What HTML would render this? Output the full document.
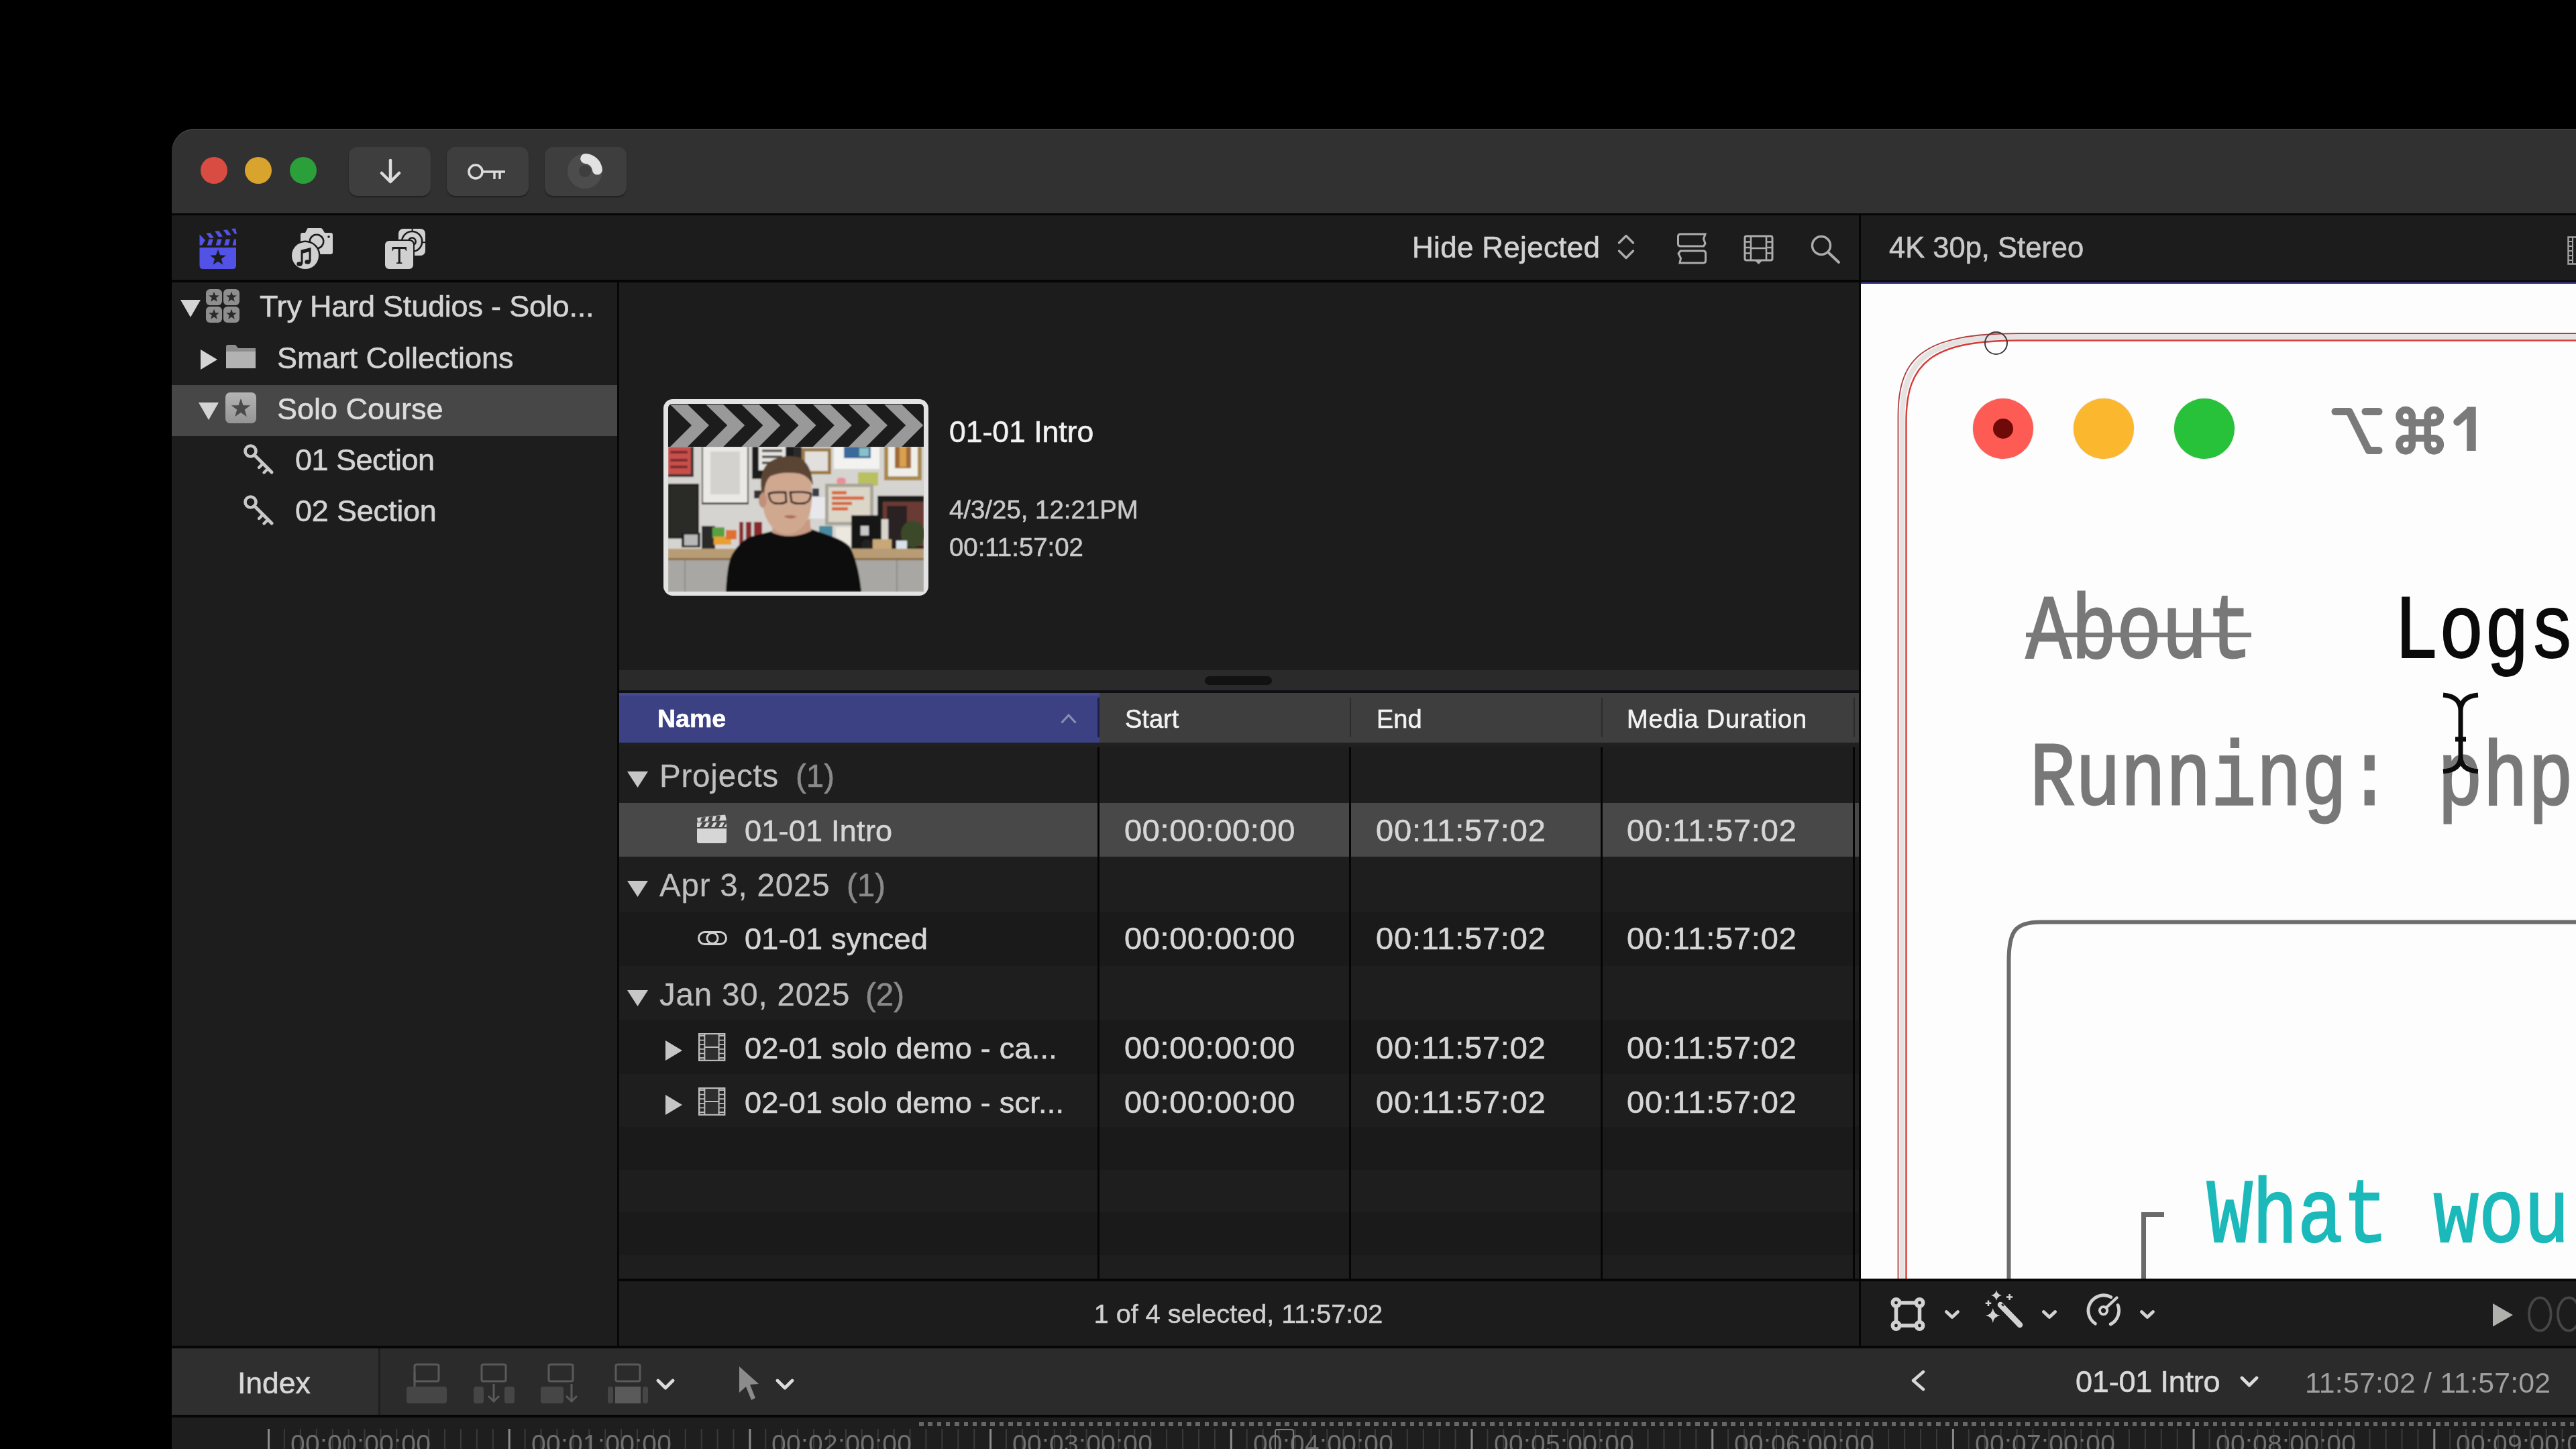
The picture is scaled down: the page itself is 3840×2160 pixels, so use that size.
<!DOCTYPE html>
<html><head><meta charset="utf-8"><title>Final Cut Pro</title>
<style>
html,body{margin:0;padding:0;width:3840px;height:2160px;overflow:hidden;background:#000;}
body{position:relative;font-family:"Liberation Sans",sans-serif;}
body>div,body>svg{position:absolute;box-sizing:border-box;}
.t{line-height:1;white-space:nowrap;-webkit-text-stroke-width:0.6px;-webkit-font-smoothing:antialiased;will-change:transform;}
</style></head><body>
<div style="left:256px;top:192px;width:3584px;height:1968px;background:#1c1c1c;border-top-left-radius:34px;"></div>
<div style="left:256px;top:192px;width:3584px;height:126px;background:#313131;border-top-left-radius:34px;box-shadow:inset 0 1.5px 0 #424242;"></div>
<div style="left:299px;top:234px;width:40px;height:40px;border-radius:50%;background:#d94c42"></div>
<div style="left:365px;top:234px;width:40px;height:40px;border-radius:50%;background:#d8a42e"></div>
<div style="left:432px;top:234px;width:40px;height:40px;border-radius:50%;background:#2a9f3a"></div>
<div style="left:520px;top:219px;width:122px;height:73px;background:#3e3e3e;border-radius:13px;box-shadow:0 2px 2px rgba(0,0,0,0.35);"></div>
<div style="left:666px;top:219px;width:122px;height:73px;background:#3e3e3e;border-radius:13px;box-shadow:0 2px 2px rgba(0,0,0,0.35);"></div>
<div style="left:812px;top:219px;width:122px;height:73px;background:#3e3e3e;border-radius:13px;box-shadow:0 2px 2px rgba(0,0,0,0.35);"></div>
<svg style="left:552px;top:228px;" width="60" height="56" viewBox="0 0 60 56"><path d="M30 11 V42 M17 30 L30 43 L43 30" stroke="#dddddd" stroke-width="4.5" fill="none" stroke-linecap="round" stroke-linejoin="round"/></svg>
<svg style="left:690px;top:236px;" width="70" height="40" viewBox="0 0 70 40"><circle cx="19" cy="20" r="10" stroke="#dddddd" stroke-width="3.6" fill="none"/><path d="M29 20 H63" stroke="#dddddd" stroke-width="3.6"/><path d="M47 20 V31 M55 20 V31" stroke="#dddddd" stroke-width="3.4"/></svg>
<svg style="left:840px;top:223px;" width="64" height="64" viewBox="0 0 64 64"><circle cx="32" cy="32" r="17.5" stroke="#4c4c4c" stroke-width="17" fill="none"/><path d="M32.65 13.51 A18.5 18.5 0 0 1 50.40 30.07" stroke="#e2e2e2" stroke-width="15" stroke-linecap="round" fill="none"/></svg>
<div style="left:256px;top:318px;width:3584px;height:3px;background:#050505;"></div>
<div style="left:256px;top:321px;width:3584px;height:96px;background:#1c1c1c;"></div>
<div style="left:256px;top:417px;width:3584px;height:4px;background:#050505;"></div>
<svg style="left:296px;top:339px;" width="58" height="64" viewBox="0 0 58 64"><g fill="#5252e6"><path d="M1.5 30 H56 V56.5 Q56 62 50.5 62 H7 Q1.5 62 1.5 56.5 Z"/><path d="M1.5 10.5 L10.0 19.0 L5.0 26.8 L1.5 26.8 Z"/><path d="M15.4 17.6 L21.8 17.6 L19.2 26.8 L12.8 26.8 Z"/><path d="M28.3 17.6 L34.7 17.6 L32.1 26.8 L25.7 26.8 Z"/><path d="M40.7 17.6 L47.1 17.6 L44.5 26.8 L38.1 26.8 Z"/><path d="M53.1 17.6 L56.0 17.6 L56.0 26.8 L50.5 26.8 Z"/><path d="M11.4 8.7 L17.4 8.1 L23.0 15.6 L17.0 16.2 Z"/><path d="M24.3 5.7 L30.3 5.1 L36.0 13.6 L30.0 14.2 Z"/><path d="M36.8 3.9 L42.8 3.3 L48.5 11.2 L42.5 11.8 Z"/><path d="M49.0 2.0 L55.0 1.4 L57.0 9.5 L54.2 10.1 Z"/></g><polygon points="29.00,33.00 32.06,41.29 40.89,41.64 33.95,47.11 36.35,55.61 29.00,50.70 21.65,55.61 24.05,47.11 17.11,41.64 25.94,41.29" fill="#1c1c1c"/></svg>
<svg style="left:432px;top:339px;" width="66" height="64" viewBox="0 0 66 64"><g fill="#d0d0d0"><path d="M26 2 Q26 1 28 1 H46 Q48 1 49 3 L52 8 H61 Q64 8 64 11 V37 Q64 40 61 40 H19 Q16 40 16 37 V11 Q16 8 19 8 H23 Z"/></g><circle cx="40" cy="21" r="11.5" fill="#1c1c1c"/><circle cx="40" cy="21" r="9" fill="#d0d0d0"/><circle cx="58" cy="14" r="1.8" fill="#1c1c1c"/><circle cx="23" cy="42" r="22.5" fill="#1c1c1c"/><circle cx="23" cy="42" r="20" fill="#d0d0d0"/><path d="M18 54 V35 L30 32 V51" stroke="#1c1c1c" stroke-width="3" fill="none"/><path d="M18 35 L30 32 V36 L18 39 Z" fill="#1c1c1c"/><ellipse cx="14.5" cy="54.5" rx="4.2" ry="3.2" fill="#1c1c1c"/><ellipse cx="26.5" cy="51.5" rx="4.2" ry="3.2" fill="#1c1c1c"/></svg>
<svg style="left:572px;top:339px;" width="66" height="64" viewBox="0 0 66 64"><rect x="22" y="2" width="40" height="40" rx="7" fill="#d0d0d0"/><circle cx="42.2" cy="21" r="15" fill="none" stroke="#1c1c1c" stroke-width="2.6"/><circle cx="42.2" cy="21" r="5.5" fill="none" stroke="#1c1c1c" stroke-width="2.6"/><path d="M42.6 1 V6 M57.5 22.3 H63" stroke="#1c1c1c" stroke-width="2"/><rect x="0" y="18" width="46" height="45" rx="7" fill="#1c1c1c"/><rect x="2" y="20" width="42" height="42" rx="6" fill="#d0d0d0"/><path d="M12.5 29 H34 V35 H33 Q32.5 32 30 32 H24.8 V51.5 Q24.8 52.5 27.5 52.5 V54 H19 V52.5 Q21.7 52.5 21.7 51.5 V32 H16.5 Q14 32 13.5 35 H12.5 Z" fill="#1c1c1c"/></svg>
<div style="left:256px;top:421px;width:664px;height:1585px;background:#1d1d1d;"></div>
<div style="left:920px;top:421px;width:3px;height:1585px;background:#070707;"></div>
<div style="left:256px;top:574px;width:664px;height:76px;background:#474747;"></div>
<div class="t" style="left:387px;top:434.4px;font-size:45px;color:#d4d4d4;font-family:'Liberation Sans',sans-serif;letter-spacing:-0.2px;">Try Hard Studios - Solo...</div>
<div class="t" style="left:413px;top:511.1px;font-size:45px;color:#d4d4d4;font-family:'Liberation Sans',sans-serif;">Smart Collections</div>
<div class="t" style="left:413px;top:586.7px;font-size:45px;color:#dcdcdc;font-family:'Liberation Sans',sans-serif;">Solo Course</div>
<div class="t" style="left:440px;top:662.6px;font-size:45px;color:#d4d4d4;font-family:'Liberation Sans',sans-serif;letter-spacing:-0.5px;">01 Section</div>
<div class="t" style="left:440px;top:739.3px;font-size:45px;color:#d4d4d4;font-family:'Liberation Sans',sans-serif;letter-spacing:-0.2px;">02 Section</div>
<svg style="left:269px;top:447px;" width="30" height="26" viewBox="0 0 30 26"><path d="M0 0 H30 L15 26 Z" fill="#d4d4d4"/></svg>
<svg style="left:299px;top:521px;" width="25" height="30" viewBox="0 0 25 30"><path d="M0 0 L25 15 L0 30 Z" fill="#d4d4d4"/></svg>
<svg style="left:296px;top:600px;" width="30" height="26" viewBox="0 0 30 26"><path d="M0 0 H30 L15 26 Z" fill="#d4d4d4"/></svg>
<svg style="left:307px;top:431px;" width="50" height="50" viewBox="0 0 50 50"><rect x="0" y="0" width="24" height="24" rx="6" fill="#8e8e8e"/><polygon points="12.00,3.80 14.00,9.25 19.80,9.47 15.23,13.05 16.82,18.63 12.00,15.40 7.18,18.63 8.77,13.05 4.20,9.47 10.00,9.25" fill="#2a2a2a"/><rect x="26" y="0" width="24" height="24" rx="6" fill="#8e8e8e"/><polygon points="38.00,3.80 40.00,9.25 45.80,9.47 41.23,13.05 42.82,18.63 38.00,15.40 33.18,18.63 34.77,13.05 30.20,9.47 36.00,9.25" fill="#2a2a2a"/><rect x="0" y="26" width="24" height="24" rx="6" fill="#8e8e8e"/><polygon points="12.00,29.80 14.00,35.25 19.80,35.47 15.23,39.05 16.82,44.63 12.00,41.40 7.18,44.63 8.77,39.05 4.20,35.47 10.00,35.25" fill="#2a2a2a"/><rect x="26" y="26" width="24" height="24" rx="6" fill="#8e8e8e"/><polygon points="38.00,29.80 40.00,35.25 45.80,35.47 41.23,39.05 42.82,44.63 38.00,41.40 33.18,44.63 34.77,39.05 30.20,35.47 36.00,35.25" fill="#2a2a2a"/></svg>
<svg style="left:336px;top:514px;" width="46" height="36" viewBox="0 0 46 36"><path d="M1 3 Q1 0 4 0 H15 L19 5 H45 V35 H1 Z" fill="#8c8c8c"/><path d="M1 10 H45 V35 H1 Z" fill="#b2b2b2"/></svg>
<svg style="left:336px;top:585px;" width="46" height="46" viewBox="0 0 46 46"><defs><linearGradient id="evg" x1="0" y1="0" x2="0" y2="1"><stop offset="0" stop-color="#b4b4b4"/><stop offset="1" stop-color="#949494"/></linearGradient></defs><rect x="0" y="0" width="46" height="46" rx="7" fill="url(#evg)"/><polygon points="23.00,9.00 26.53,19.15 37.27,19.36 28.71,25.85 31.82,36.14 23.00,30.00 14.18,36.14 17.29,25.85 8.73,19.36 19.47,19.15" fill="#4a4a4a"/></svg>
<svg style="left:362px;top:661px;" width="50" height="52" viewBox="0 0 50 52"><circle cx="11.5" cy="11.5" r="8" stroke="#c8c8c8" stroke-width="4.6" fill="none"/><path d="M17 17 L43 43" stroke="#c8c8c8" stroke-width="5" stroke-linecap="round"/><path d="M30 30 L24 36 M37.5 37.5 L31.5 43.5" stroke="#c8c8c8" stroke-width="4.4" stroke-linecap="round"/></svg>
<svg style="left:362px;top:737px;" width="50" height="52" viewBox="0 0 50 52"><circle cx="11.5" cy="11.5" r="8" stroke="#c8c8c8" stroke-width="4.6" fill="none"/><path d="M17 17 L43 43" stroke="#c8c8c8" stroke-width="5" stroke-linecap="round"/><path d="M30 30 L24 36 M37.5 37.5 L31.5 43.5" stroke="#c8c8c8" stroke-width="4.4" stroke-linecap="round"/></svg>
<div style="left:923px;top:421px;width:1848px;height:578px;background:#1c1c1c;"></div>
<div style="left:989px;top:595px;width:395px;height:293px;background:#e3e3e3;border-radius:14px;"></div>
<div style="left:996px;top:602px;width:381px;height:279px;background:#1c1c1c;border-radius:6px;overflow:hidden;"></div>
<svg style="left:996px;top:602px;" width="381" height="64" viewBox="996 602 381 64"><path d="M999.0 603 H1025.0 L1057.0 634 L1025.0 666 H999.0 L1031.0 634 Z" fill="#999999"/><path d="M1052.2 603 H1078.2 L1110.2 634 L1078.2 666 H1052.2 L1084.2 634 Z" fill="#999999"/><path d="M1105.4 603 H1131.4 L1163.4 634 L1131.4 666 H1105.4 L1137.4 634 Z" fill="#999999"/><path d="M1158.6 603 H1184.6 L1216.6 634 L1184.6 666 H1158.6 L1190.6 634 Z" fill="#999999"/><path d="M1211.8 603 H1237.8 L1269.8 634 L1237.8 666 H1211.8 L1243.8 634 Z" fill="#999999"/><path d="M1265.0 603 H1291.0 L1323.0 634 L1291.0 666 H1265.0 L1297.0 634 Z" fill="#999999"/><path d="M1318.2 603 H1344.2 L1376.2 634 L1344.2 666 H1318.2 L1350.2 634 Z" fill="#999999"/></svg>
<svg style="left:996px;top:666px" width="381" height="216" viewBox="0 0 381 216"><defs><filter id="pb" x="-5%" y="-5%" width="110%" height="110%"><feGaussianBlur stdDeviation="0.9"/></filter></defs><rect width="381" height="216" fill="#cfcdca"/><g filter="url(#pb)"><rect x="0" y="0" width="381" height="155" fill="#d6d4d0"/><rect x="0" y="0" width="38" height="45" fill="#2a2a2a"/><rect x="0" y="0" width="34" height="41" fill="#c8504c"/><rect x="3" y="6" width="26" height="4" fill="#7a2a2a"/><rect x="3" y="18" width="26" height="4" fill="#7a2a2a"/><rect x="3" y="28" width="26" height="4" fill="#7a2a2a"/><rect x="50" y="0" width="70" height="86" fill="#3a3a3a"/><rect x="52" y="0" width="66" height="83" fill="#ebe9e5"/><rect x="63" y="7" width="44" height="64" fill="#d4d2ce"/><rect x="125" y="0" width="62" height="48" fill="#1e1e1e"/><rect x="135" y="0" width="40" height="35" fill="#e6e4e0"/><rect x="140" y="4" width="30" height="4" fill="#555"/><rect x="140" y="13" width="30" height="4" fill="#555"/><rect x="140" y="22" width="30" height="4" fill="#555"/><rect x="187" y="0" width="12" height="20" fill="#2a2a2a"/><rect x="199" y="2" width="44" height="39" fill="#9c7a44"/><rect x="204" y="7" width="34" height="29" fill="#e2e0dc"/><rect x="247" y="0" width="68" height="33" fill="#f2f2f0"/><rect x="262" y="0" width="40" height="17" fill="#3a6a9a"/><rect x="285" y="2" width="14" height="12" fill="#8ac0c8"/><rect x="322" y="0" width="56" height="50" fill="#a88a50"/><rect x="328" y="0" width="44" height="44" fill="#f0eee8"/><rect x="338" y="0" width="24" height="32" fill="#a06a3a"/><rect x="345" y="0" width="10" height="30" fill="#d8a050"/><rect x="251" y="46" width="14" height="10" rx="5" fill="#e8909a"/><rect x="283" y="38" width="30" height="20" fill="#b8c060"/><rect x="0" y="55" width="46" height="82" fill="#1c1c1c"/><rect x="3" y="58" width="40" height="76" fill="#2a2a28"/><rect x="128" y="65" width="14" height="12" fill="#333"/><rect x="215" y="62" width="10" height="12" fill="#3a3a4a"/><rect x="212" y="75" width="26" height="32" fill="#e8e8ec"/><rect x="234" y="55" width="72" height="62" fill="#a8a498"/><rect x="239" y="60" width="62" height="52" fill="#dcd6c8"/><rect x="244" y="66" width="22" height="5" fill="#d86a40"/><rect x="244" y="74" width="48" height="5" fill="#d86a40"/><rect x="244" y="82" width="30" height="5" fill="#d86a40"/><rect x="244" y="90" width="24" height="5" fill="#d86a40"/><rect x="312" y="73" width="69" height="80" fill="#1a1a1a"/><rect x="320" y="82" width="61" height="66" fill="#6a3a34"/><rect x="326" y="88" width="30" height="60" fill="#2a2220"/><rect x="273" y="102" width="42" height="51" fill="#141414"/><rect x="287" y="118" width="12" height="14" fill="#c8c8c8"/><rect x="318" y="108" width="10" height="45" fill="#d8d4cc"/><ellipse cx="365" cy="130" rx="18" ry="20" fill="#3a4a2a"/><rect x="20" y="128" width="28" height="22" fill="#222"/><rect x="24" y="131" width="20" height="16" fill="#b8b8b8"/><rect x="50" y="118" width="20" height="35" fill="#2a2a2a"/><rect x="66" y="120" width="18" height="16" fill="#5aa040"/><rect x="68" y="134" width="26" height="12" fill="#e8a030"/><rect x="86" y="124" width="16" height="14" fill="#e07030"/><rect x="106" y="112" width="34" height="40" fill="#8a2a2a"/><rect x="112" y="112" width="4" height="40" fill="#ccc"/><rect x="124" y="112" width="4" height="40" fill="#ccc"/><rect x="225" y="118" width="20" height="25" fill="#4a8aa0"/><rect x="250" y="120" width="22" height="30" fill="#ece8e0"/><circle cx="296" cy="146" r="8" fill="#222"/><rect x="305" y="138" width="28" height="15" fill="#c8a878"/><rect x="340" y="140" width="16" height="12" fill="#d8e0e8"/><rect x="0" y="152" width="381" height="17" fill="#b89c74"/><rect x="0" y="166" width="381" height="3" fill="#8a6a4a"/><rect x="0" y="169" width="381" height="47" fill="#a9a7a3"/><rect x="24" y="169" width="2" height="47" fill="#8e8c88"/><rect x="340" y="169" width="2" height="47" fill="#8e8c88"/><path d="M86 216 Q88 170 97 158 Q108 140 123 134 L154 126 Q184 140 214 123 L245 134 Q262 140 271 149 Q284 175 288 216 Z" fill="#0d0d0d"/><path d="M154 110 Q156 124 155 128 Q184 140 214 125 Q211 118 212 108 Z" fill="#c89a84"/><path d="M140 70 Q136 40 150 28 Q170 14 195 20 Q214 30 214 62 Q216 90 208 108 Q196 130 176 130 Q158 128 148 110 Q140 96 140 70 Z" fill="#d0a890"/><ellipse cx="141" cy="80" rx="6" ry="11" fill="#c0907a"/><path d="M139 66 Q135 34 152 22 Q172 10 196 16 Q214 26 216 58 Q210 44 196 40 Q170 36 152 44 Q144 52 143 70 Z" fill="#5a4434"/><path d="M150 70 Q156 67 175 68 L176 82 Q170 86 158 84 Q151 82 150 70 Z M182 68 Q205 66 213 70 Q212 82 204 84 Q190 86 184 82 Z" fill="none" stroke="#2a2422" stroke-width="2.8"/><path d="M172 104 Q180 100 192 104 Q184 110 172 104 Z" fill="#a86a60"/></g></svg>
<div class="t" style="left:1415px;top:622.3px;font-size:44.5px;color:#f2f2f2;font-family:'Liberation Sans',sans-serif;">01-01 Intro</div>
<div class="t" style="left:1415px;top:741.1px;font-size:38.4px;color:#c9c9c9;font-family:'Liberation Sans',sans-serif;">4/3/25, 12:21PM</div>
<div class="t" style="left:1415px;top:796.5px;font-size:38.4px;color:#c9c9c9;font-family:'Liberation Sans',sans-serif;">00:11:57:02</div>
<div style="left:923px;top:999px;width:1848px;height:30px;background:#2a2a2a;"></div>
<div style="left:1796px;top:1008px;width:100px;height:13px;background:#121212;border-radius:7px;"></div>
<div style="left:923px;top:1029px;width:1848px;height:4px;background:#0e0f14;"></div>
<div style="left:923px;top:1033px;width:716px;height:74px;background:#3b4183;"></div>
<div style="left:923px;top:1033px;width:716px;height:4px;background:#434b8e;"></div>
<div style="left:1639px;top:1033px;width:1132px;height:74px;background:#3e3e3e;"></div>
<div style="left:1636px;top:1040px;width:3px;height:59px;background:#1c2050;"></div>
<div style="left:2012px;top:1040px;width:2px;height:59px;background:#2c2c2c;"></div>
<div style="left:2387px;top:1040px;width:2px;height:59px;background:#2c2c2c;"></div>
<div style="left:2763px;top:1040px;width:2px;height:59px;background:#2c2c2c;"></div>
<div class="t" style="left:980px;top:1053.3px;font-size:37.5px;color:#ffffff;font-family:'Liberation Sans',sans-serif;font-weight:700;">Name</div>
<svg style="left:1578px;top:1060px;" width="30" height="22" viewBox="0 0 30 22"><path d="M4.5 17.5 L15 6 L25.5 17.5" stroke="#8a8eb2" stroke-width="3.2" fill="none" stroke-linecap="butt" stroke-linejoin="miter"/></svg>
<div class="t" style="left:1677px;top:1052.8px;font-size:38px;color:#f2f2f2;font-family:'Liberation Sans',sans-serif;-webkit-text-stroke:0.6px #f2f2f2;">Start</div>
<div class="t" style="left:2052px;top:1052.8px;font-size:38px;color:#f2f2f2;font-family:'Liberation Sans',sans-serif;-webkit-text-stroke:0.6px #f2f2f2;">End</div>
<div class="t" style="left:2425px;top:1052.8px;font-size:38px;color:#f2f2f2;font-family:'Liberation Sans',sans-serif;letter-spacing:0.8px;-webkit-text-stroke:0.6px #f2f2f2;">Media Duration</div>
<div style="left:923px;top:1107px;width:1848px;height:799px;background:#1a1a1a;"></div>
<div style="left:923px;top:1107px;width:1848px;height:90px;background:#1e1e1e;"></div>
<div style="left:923px;top:1277px;width:1848px;height:83px;background:#1e1e1e;"></div>
<div style="left:923px;top:1440px;width:1848px;height:81px;background:#1e1e1e;"></div>
<div style="left:923px;top:1601px;width:1848px;height:79px;background:#1e1e1e;"></div>
<div style="left:923px;top:1744px;width:1848px;height:63px;background:#1e1e1e;"></div>
<div style="left:923px;top:1871px;width:1848px;height:35px;background:#1e1e1e;"></div>
<div style="left:923px;top:1197px;width:1848px;height:80px;background:#484848;"></div>
<div style="left:923px;top:1107px;width:1848px;height:7px;background:#202020;"></div>
<div style="left:1636px;top:1114px;width:3px;height:792px;background:#050505;"></div>
<div style="left:2011px;top:1114px;width:3px;height:792px;background:#050505;"></div>
<div style="left:2386px;top:1114px;width:3px;height:792px;background:#050505;"></div>
<div style="left:2762px;top:1114px;width:3px;height:792px;background:#050505;"></div>
<svg style="left:935px;top:1150px;" width="31" height="24" viewBox="0 0 31 24"><path d="M0 0 H31 L15.5 24 Z" fill="#c6c6c6"/></svg>
<div class="t" style="left:983px;top:1132.8px;font-size:47.5px;color:#bfbfbf;font-family:'Liberation Sans',sans-serif;letter-spacing:0.8px;-webkit-text-stroke-width:0.3px;">Projects</div>
<div class="t" style="left:1186px;top:1132.8px;font-size:47.5px;color:#8a8a8a;font-family:'Liberation Sans',sans-serif;">(1)</div>
<svg style="left:935px;top:1313px;" width="31" height="24" viewBox="0 0 31 24"><path d="M0 0 H31 L15.5 24 Z" fill="#c6c6c6"/></svg>
<div class="t" style="left:983px;top:1295.8px;font-size:47.5px;color:#bfbfbf;font-family:'Liberation Sans',sans-serif;letter-spacing:0.8px;-webkit-text-stroke-width:0.3px;">Apr 3, 2025</div>
<div class="t" style="left:1262px;top:1295.8px;font-size:47.5px;color:#8a8a8a;font-family:'Liberation Sans',sans-serif;">(1)</div>
<svg style="left:935px;top:1476px;" width="31" height="24" viewBox="0 0 31 24"><path d="M0 0 H31 L15.5 24 Z" fill="#c6c6c6"/></svg>
<div class="t" style="left:983px;top:1458.8px;font-size:47.5px;color:#bfbfbf;font-family:'Liberation Sans',sans-serif;letter-spacing:0.8px;-webkit-text-stroke-width:0.3px;">Jan 30, 2025</div>
<div class="t" style="left:1290px;top:1458.8px;font-size:47.5px;color:#8a8a8a;font-family:'Liberation Sans',sans-serif;">(2)</div>
<div class="t" style="left:1110px;top:1215.6px;font-size:45px;color:#d6d6d6;font-family:'Liberation Sans',sans-serif;letter-spacing:0.25px;">01-01 Intro</div>
<div class="t" style="left:1676px;top:1213.9px;font-size:47px;color:#d6d6d6;font-family:'Liberation Sans',sans-serif;letter-spacing:0.6px;">00:00:00:00</div>
<div class="t" style="left:2051px;top:1213.9px;font-size:47px;color:#d6d6d6;font-family:'Liberation Sans',sans-serif;letter-spacing:0.8px;">00:11:57:02</div>
<div class="t" style="left:2425px;top:1213.9px;font-size:47px;color:#d6d6d6;font-family:'Liberation Sans',sans-serif;letter-spacing:0.8px;">00:11:57:02</div>
<svg style="left:1038px;top:1213.7px;" width="48" height="44" viewBox="0 0 48 44"><path d="M1 21 H45 V40 Q45 43 42 43 H4 Q1 43 1 40 Z" fill="#d6d6d6"/><path d="M1 12 H45 V19 H1 Z" fill="#d6d6d6"/><path d="M1 5 L43 0.5 L45 9 L2 11 Z" fill="#d6d6d6"/><path d="M9 12 H15 L11 19 H5 Z M20 12 H26 L22 19 H16 Z M31 12 H37 L33 19 H27 Z M42 12 H45 V13 L41 19 H38 Z" fill="#474747"/><path d="M8 4.5 L14 4 L12 10.5 L6 10.8 Z M19 3.4 L25 2.8 L23 9.9 L17 10.2 Z M30 2.3 L36 1.7 L34 9.4 L28 9.6 Z" fill="#474747"/></svg>
<div class="t" style="left:1110px;top:1376.9px;font-size:45px;color:#d6d6d6;font-family:'Liberation Sans',sans-serif;letter-spacing:0.25px;">01-01 synced</div>
<div class="t" style="left:1676px;top:1375.2px;font-size:47px;color:#d6d6d6;font-family:'Liberation Sans',sans-serif;letter-spacing:0.6px;">00:00:00:00</div>
<div class="t" style="left:2051px;top:1375.2px;font-size:47px;color:#d6d6d6;font-family:'Liberation Sans',sans-serif;letter-spacing:0.8px;">00:11:57:02</div>
<div class="t" style="left:2425px;top:1375.2px;font-size:47px;color:#d6d6d6;font-family:'Liberation Sans',sans-serif;letter-spacing:0.8px;">00:11:57:02</div>
<svg style="left:1039px;top:1387px;" width="48" height="24" viewBox="0 0 48 24"><rect x="2.5" y="2.5" width="41" height="18" rx="9" fill="none" stroke="#cfcfcf" stroke-width="3"/><circle cx="23" cy="11.5" r="8" fill="none" stroke="#cfcfcf" stroke-width="3"/></svg>
<div class="t" style="left:1110px;top:1539.9px;font-size:45px;color:#d6d6d6;font-family:'Liberation Sans',sans-serif;letter-spacing:0.25px;">02-01 solo demo - ca...</div>
<div class="t" style="left:1676px;top:1538.2px;font-size:47px;color:#d6d6d6;font-family:'Liberation Sans',sans-serif;letter-spacing:0.6px;">00:00:00:00</div>
<div class="t" style="left:2051px;top:1538.2px;font-size:47px;color:#d6d6d6;font-family:'Liberation Sans',sans-serif;letter-spacing:0.8px;">00:11:57:02</div>
<div class="t" style="left:2425px;top:1538.2px;font-size:47px;color:#d6d6d6;font-family:'Liberation Sans',sans-serif;letter-spacing:0.8px;">00:11:57:02</div>
<svg style="left:992px;top:1551px;" width="25" height="30" viewBox="0 0 25 30"><path d="M0 0 L25 15 L0 30 Z" fill="#c6c6c6"/></svg>
<svg style="left:1041px;top:1540px;" width="42" height="44" viewBox="0 0 42 44"><rect x="1.2" y="1.2" width="38" height="39.5" fill="#262626" stroke="#bdbdbd" stroke-width="2.4"/><path d="M9.5 1.2 V40.7 M30.5 1.2 V40.7 M9.5 21 H30.5" stroke="#bdbdbd" stroke-width="2.2"/><rect x="10.6" y="2.3" width="18.8" height="17.6" fill="#2e2e2e"/><rect x="10.6" y="22.1" width="18.8" height="17.5" fill="#2e2e2e"/><path d="M2 4.0 H9 M31 4.0 H38" stroke="#bdbdbd" stroke-width="1.8"/><path d="M2 10.6 H9 M31 10.6 H38" stroke="#bdbdbd" stroke-width="1.8"/><path d="M2 17.2 H9 M31 17.2 H38" stroke="#bdbdbd" stroke-width="1.8"/><path d="M2 23.8 H9 M31 23.8 H38" stroke="#bdbdbd" stroke-width="1.8"/><path d="M2 30.4 H9 M31 30.4 H38" stroke="#bdbdbd" stroke-width="1.8"/><path d="M2 37.0 H9 M31 37.0 H38" stroke="#bdbdbd" stroke-width="1.8"/></svg>
<div class="t" style="left:1110px;top:1620.9px;font-size:45px;color:#d6d6d6;font-family:'Liberation Sans',sans-serif;letter-spacing:0.25px;">02-01 solo demo - scr...</div>
<div class="t" style="left:1676px;top:1619.2px;font-size:47px;color:#d6d6d6;font-family:'Liberation Sans',sans-serif;letter-spacing:0.6px;">00:00:00:00</div>
<div class="t" style="left:2051px;top:1619.2px;font-size:47px;color:#d6d6d6;font-family:'Liberation Sans',sans-serif;letter-spacing:0.8px;">00:11:57:02</div>
<div class="t" style="left:2425px;top:1619.2px;font-size:47px;color:#d6d6d6;font-family:'Liberation Sans',sans-serif;letter-spacing:0.8px;">00:11:57:02</div>
<svg style="left:992px;top:1632px;" width="25" height="30" viewBox="0 0 25 30"><path d="M0 0 L25 15 L0 30 Z" fill="#c6c6c6"/></svg>
<svg style="left:1041px;top:1621px;" width="42" height="44" viewBox="0 0 42 44"><rect x="1.2" y="1.2" width="38" height="39.5" fill="#262626" stroke="#bdbdbd" stroke-width="2.4"/><path d="M9.5 1.2 V40.7 M30.5 1.2 V40.7 M9.5 21 H30.5" stroke="#bdbdbd" stroke-width="2.2"/><rect x="10.6" y="2.3" width="18.8" height="17.6" fill="#2e2e2e"/><rect x="10.6" y="22.1" width="18.8" height="17.5" fill="#2e2e2e"/><path d="M2 4.0 H9 M31 4.0 H38" stroke="#bdbdbd" stroke-width="1.8"/><path d="M2 10.6 H9 M31 10.6 H38" stroke="#bdbdbd" stroke-width="1.8"/><path d="M2 17.2 H9 M31 17.2 H38" stroke="#bdbdbd" stroke-width="1.8"/><path d="M2 23.8 H9 M31 23.8 H38" stroke="#bdbdbd" stroke-width="1.8"/><path d="M2 30.4 H9 M31 30.4 H38" stroke="#bdbdbd" stroke-width="1.8"/><path d="M2 37.0 H9 M31 37.0 H38" stroke="#bdbdbd" stroke-width="1.8"/></svg>
<div style="left:923px;top:1906px;width:1848px;height:4px;background:#060606;"></div>
<div style="left:923px;top:1910px;width:1848px;height:96px;background:#1c1c1c;"></div>
<div class="t" style="left:1846px;top:1938.5px;font-size:39.6px;color:#cfcfcf;font-family:'Liberation Sans',sans-serif;transform:translateX(-50%);-webkit-text-stroke:0.5px #cfcfcf;">1 of 4 selected, 11:57:02</div>
<div class="t" style="left:2105px;top:346.8px;font-size:44px;color:#d2d2d2;font-family:'Liberation Sans',sans-serif;letter-spacing:0.3px;">Hide Rejected</div>
<svg style="left:2410px;top:348px;" width="28" height="40" viewBox="0 0 28 40"><path d="M3.5 14 L14 3.5 L24.5 14 M3.5 26 L14 36.5 L24.5 26" stroke="#acacac" stroke-width="3.4" fill="none" stroke-linecap="round" stroke-linejoin="round"/></svg>
<svg style="left:2499px;top:347px;" width="46" height="48" viewBox="0 0 46 48"><path d="M6 2 H43 L40.5 9 L43 16 L40.5 20 H6 Q2.5 20 2.5 16.5 V5.5 Q2.5 2 6 2 Z" fill="none" stroke="#acacac" stroke-width="3"/><path d="M6 27 H40 Q43.5 27 43.5 30.5 V41.5 Q43.5 45 40 45 H5 L6.5 38 L3 31 Z" fill="none" stroke="#acacac" stroke-width="3"/></svg>
<svg style="left:2599px;top:350px;" width="45" height="44" viewBox="0 0 45 44"><rect x="2" y="2" width="41" height="36" rx="2.5" fill="none" stroke="#acacac" stroke-width="3"/><path d="M11 2 V38 M34 2 V38 M11 20 H34" stroke="#acacac" stroke-width="2.6"/><path d="M2 10.5 H11 M2 19 H11 M2 27.5 H11 M34 10.5 H43 M34 19 H43 M34 27.5 H43" stroke="#acacac" stroke-width="2.6"/><path d="M16.5 38 L22.5 44 L28.5 38 Z" fill="#acacac"/></svg>
<svg style="left:2697px;top:348px;" width="48" height="47" viewBox="0 0 48 47"><circle cx="18" cy="18" r="13.5" stroke="#acacac" stroke-width="3.4" fill="none"/><path d="M28 28 L44 43" stroke="#acacac" stroke-width="4" stroke-linecap="round"/></svg>
<div style="left:2771px;top:321px;width:3px;height:1689px;background:#060606;"></div>
<div style="left:2774px;top:321px;width:1066px;height:97px;background:#1c1c1c;"></div>
<div class="t" style="left:2816px;top:348.2px;font-size:43.5px;color:#c9c9c9;font-family:'Liberation Sans',sans-serif;">4K 30p, Stereo</div>
<svg style="left:3827px;top:352px;" width="13" height="43" viewBox="0 0 13 43"><rect x="1.5" y="1.5" width="20" height="40" fill="none" stroke="#a0a0a0" stroke-width="2.5"/><path d="M1.5 8 H8 M1.5 15 H8 M1.5 22 H8 M1.5 29 H8 M1.5 36 H8 M8 1.5 V41" stroke="#a0a0a0" stroke-width="2"/></svg>
<div style="left:2774px;top:418px;width:1066px;height:2px;background:#050505;"></div>
<div style="left:2774px;top:420px;width:1066px;height:3px;background:#2c2c6e;"></div>
<div style="left:2774px;top:423px;width:1066px;height:1483px;background:#fdfdfd;"></div>
<svg style="left:2800px;top:480px;" width="1050" height="1430" viewBox="2800 480 1050 1430"><path d="M2835.5 1910 V624.0 C2835.5 535.0 2874.8 502 3010 502 H3850" stroke="#e6e2e2" stroke-width="8" fill="none"/><path d="M2829.5 1910 V620.0 C2829.5 530.0 2870.0 497 3010 497 H3850" stroke="#b04040" stroke-width="1.8" fill="none"/><path d="M2841.5 1910 V628.4 C2841.5 540.5 2879.6 507.5 3010 507.5 H3850" stroke="#d63c38" stroke-width="2.4" fill="none"/></svg>
<div style="left:2958px;top:494px;width:35px;height:35px;border:2.5px solid #3a3a3a;border-radius:50%;"></div>
<div style="left:2941px;top:594px;width:90px;height:90px;border-radius:50%;background:#fd5b54;box-shadow:0 0 2px rgba(0,0,0,0.2)"></div>
<div style="left:3091px;top:594px;width:90px;height:90px;border-radius:50%;background:#fbb72d;box-shadow:0 0 2px rgba(0,0,0,0.2)"></div>
<div style="left:3241px;top:594px;width:90px;height:90px;border-radius:50%;background:#27c23a;box-shadow:0 0 2px rgba(0,0,0,0.2)"></div>
<div style="left:2971px;top:624px;width:30px;height:30px;border-radius:50%;background:#6e0a08"></div>
<svg style="left:3460px;top:590px;" width="250" height="100" viewBox="3460 590 250 100"><path d="M3481 613.5 H3502 L3531 671.5 H3546 M3526 613.5 H3546" stroke="#7a7a7a" stroke-width="11" fill="none" stroke-linecap="round" stroke-linejoin="round"/><path d="M3595.7 630.2 V653.2 M3618.7 630.2 V653.2 M3595.7 630.2 H3618.7 M3595.7 653.2 H3618.7" stroke="#7a7a7a" stroke-width="10.5" fill="none" stroke-linejoin="round"/><path d="M3595.7 630.2 V620.6 A9.6 9.6 0 1 0 3586.1 630.2 H3595.7" stroke="#7a7a7a" stroke-width="10.5" fill="none" stroke-linejoin="round"/><path d="M3618.7 630.2 V620.6 A9.6 9.6 0 1 1 3628.3 630.2 H3618.7" stroke="#7a7a7a" stroke-width="10.5" fill="none" stroke-linejoin="round"/><path d="M3595.7 653.2 V662.8 A9.6 9.6 0 1 1 3586.1 653.2 H3595.7" stroke="#7a7a7a" stroke-width="10.5" fill="none" stroke-linejoin="round"/><path d="M3618.7 653.2 V662.8 A9.6 9.6 0 1 0 3628.3 653.2 H3618.7" stroke="#7a7a7a" stroke-width="10.5" fill="none" stroke-linejoin="round"/><path d="M3684 606.5 V672" stroke="#7a7a7a" stroke-width="13.5" fill="none" stroke-linecap="butt"/><path d="M3663 629 L3681 613" stroke="#7a7a7a" stroke-width="11.5" stroke-linecap="round"/></svg>
<div class="t" style="left:3020px;top:893.8px;font-size:112.5px;color:#787878;font-family:'Liberation Mono',sans-serif;transform:scaleY(1.2);transform-origin:0 76.6%;-webkit-text-stroke:2.3px #787878;">About</div>
<div style="left:3020px;top:943px;width:336px;height:7px;background:#7a7a7a;"></div>
<div class="t" style="left:3568px;top:893.8px;font-size:112.5px;color:#0a0a0a;font-family:'Liberation Mono',sans-serif;transform:scaleY(1.2);transform-origin:0 76.6%;-webkit-text-stroke:1.6px #0a0a0a;">Logs</div>
<div class="t" style="left:3026px;top:1112.8px;font-size:112.5px;color:#787878;font-family:'Liberation Mono',sans-serif;transform:scaleY(1.2);transform-origin:0 76.6%;-webkit-text-stroke:2.3px #787878;">Running: php</div>
<svg style="left:3638px;top:1030px;" width="60" height="126" viewBox="0 0 60 126"><path d="M4 6 Q30 8 30 30 V98 Q30 118 4 120 M56 6 Q30 8 30 30 M30 98 Q30 118 56 120 M22 72 H38" stroke="#0a0a0a" stroke-width="7" fill="none"/></svg>
<svg style="left:2980px;top:1360px;" width="870" height="560" viewBox="2980 1360 870 560"><path d="M2994.5 1920 V1432 C2994.5 1388 3004 1374.5 3042 1374.5 H3860" stroke="#6c6c6c" stroke-width="6" fill="none"/></svg>
<div style="left:3192px;top:1807px;width:34px;height:200px;border-left:7px solid #6a6a6a;border-top:7px solid #6a6a6a;"></div>
<div class="t" style="left:3290px;top:1764.8px;font-size:112.5px;color:#1bb9b9;font-family:'Liberation Mono',sans-serif;transform:scaleY(1.2);transform-origin:0 76.6%;-webkit-text-stroke:2.0px #1bb9b9;">What wou</div>
<div style="left:2774px;top:1906px;width:1066px;height:4px;background:#060606;"></div>
<div style="left:2774px;top:1910px;width:1066px;height:96px;background:#1c1c1c;"></div>
<svg style="left:2800px;top:1920px;" width="80" height="80" viewBox="0 0 80 80"><rect x="26.5" y="22" width="35" height="34" fill="none" stroke="#d2d2d2" stroke-width="5.5"/><circle cx="26.5" cy="22" r="5.2" fill="#1c1c1c" stroke="#d2d2d2" stroke-width="5.6"/><circle cx="61.5" cy="22" r="5.2" fill="#1c1c1c" stroke="#d2d2d2" stroke-width="5.6"/><circle cx="26.5" cy="56" r="5.2" fill="#1c1c1c" stroke="#d2d2d2" stroke-width="5.6"/><circle cx="61.5" cy="56" r="5.2" fill="#1c1c1c" stroke="#d2d2d2" stroke-width="5.6"/></svg>
<svg style="left:2895px;top:1949px;" width="30" height="21" viewBox="0 0 30 21"><path d="M6.5 6.5 L15.0 14.5 L23.5 6.5" stroke="#d2d2d2" stroke-width="4.8" fill="none" stroke-linecap="round" stroke-linejoin="round"/></svg>
<svg style="left:3040px;top:1949px;" width="30" height="21" viewBox="0 0 30 21"><path d="M6.5 6.5 L15.0 14.5 L23.5 6.5" stroke="#d2d2d2" stroke-width="4.8" fill="none" stroke-linecap="round" stroke-linejoin="round"/></svg>
<svg style="left:3186px;top:1949px;" width="30" height="21" viewBox="0 0 30 21"><path d="M6.5 6.5 L15.0 14.5 L23.5 6.5" stroke="#d2d2d2" stroke-width="4.8" fill="none" stroke-linecap="round" stroke-linejoin="round"/></svg>
<svg style="left:2950px;top:1920px;" width="70" height="64" viewBox="0 0 70 64"><path d="M32 25 L61 55" stroke="#d2d2d2" stroke-width="8.5" stroke-linecap="round"/><rect x="33.5" y="23.5" width="4" height="2.5" transform="rotate(45 35 25)" fill="#1c1c1c"/><path d="M20.8 30 Q22.3 39.5 31.8 41 Q22.3 42.5 20.8 52 Q19.3 42.5 9.8 41 Q19.3 39.5 20.8 30 Z" fill="#d2d2d2"/><path d="M26 3 Q27.25 9.75 34 11 Q27.25 12.25 26 19 Q24.75 12.25 18 11 Q24.75 9.75 26 3 Z" fill="#d2d2d2"/><path d="M45.6 9 V18 M41 13.5 H50.2" stroke="#d2d2d2" stroke-width="2.6"/><path d="M14 18.5 V27 M9.7 22.7 H18.3" stroke="#d2d2d2" stroke-width="2.6"/></svg>
<svg style="left:3100px;top:1920px;" width="72" height="64" viewBox="0 0 72 64"><path d="M23.4 53.1 A23 23 0 0 1 46.9 13.6" stroke="#d2d2d2" stroke-width="4.8" fill="none" stroke-linecap="round"/><path d="M57.1 25.4 A23 23 0 0 1 46.2 54.0" stroke="#d2d2d2" stroke-width="4.8" fill="none" stroke-linecap="round"/><circle cx="35.6" cy="33.6" r="5.6" fill="none" stroke="#d2d2d2" stroke-width="4"/><path d="M39.5 29.5 L55.5 14.5" stroke="#d2d2d2" stroke-width="4.4" stroke-linecap="round"/></svg>
<svg style="left:3716px;top:1943px;" width="31" height="35" viewBox="0 0 31 35"><path d="M0 0 L30 17.3 L0 34.6 Z" fill="#b0b0ac"/></svg>
<svg style="left:3760px;top:1925px;" width="80" height="70" viewBox="0 0 80 70"><ellipse cx="26.3" cy="34" rx="16.3" ry="24.6" fill="none" stroke="#464646" stroke-width="3.8"/><ellipse cx="69.3" cy="34" rx="16.3" ry="24.6" fill="none" stroke="#464646" stroke-width="3.8"/></svg>
<div style="left:256px;top:2006px;width:3584px;height:4px;background:#060606;"></div>
<div style="left:256px;top:2010px;width:3584px;height:99px;background:#2b2b2b;"></div>
<div style="left:256px;top:2010px;width:308px;height:99px;background:#2f2f2f;"></div>
<div style="left:564px;top:2010px;width:3px;height:99px;background:#1f1f1f;"></div>
<div class="t" style="left:354px;top:2040.3px;font-size:44.5px;color:#d8d8d8;font-family:'Liberation Sans',sans-serif;">Index</div>
<svg style="left:605px;top:2032px;" width="64" height="62" viewBox="0 0 64 62"><rect x="13" y="2" width="36" height="25" rx="2.5" fill="none" stroke="#5a5a5a" stroke-width="3"/><path d="M13 14 V36" stroke="#5a5a5a" stroke-width="3"/><rect x="1" y="35" width="60" height="25" rx="4" fill="#464646"/></svg>
<svg style="left:705px;top:2032px;" width="64" height="62" viewBox="0 0 64 62"><rect x="13" y="2" width="36" height="25" rx="2.5" fill="none" stroke="#5a5a5a" stroke-width="3"/><rect x="1" y="35" width="15" height="25" rx="4" fill="#464646"/><rect x="47" y="35" width="15" height="25" rx="4" fill="#464646"/><path d="M31 31 V57 M23 49 L31 57 L39 49" stroke="#5a5a5a" stroke-width="3" fill="none"/></svg>
<svg style="left:805px;top:2032px;" width="64" height="62" viewBox="0 0 64 62"><rect x="13" y="2" width="36" height="25" rx="2.5" fill="none" stroke="#5a5a5a" stroke-width="3"/><rect x="1" y="35" width="34" height="25" rx="4" fill="#464646"/><path d="M47 31 V57 M39 49 L47 57 L55 49" stroke="#5a5a5a" stroke-width="3" fill="none"/></svg>
<svg style="left:905px;top:2032px;" width="64" height="62" viewBox="0 0 64 62"><rect x="13" y="2" width="36" height="25" rx="2.5" fill="none" stroke="#5a5a5a" stroke-width="3"/><rect x="1" y="35" width="8" height="25" rx="3" fill="#464646"/><rect x="12" y="35" width="38" height="25" fill="#5a5a5a"/><rect x="53" y="35" width="8" height="25" rx="3" fill="#464646"/></svg>
<svg style="left:978px;top:2054px;" width="28" height="20" viewBox="0 0 28 20"><path d="M3 4 L14 15 L25 4" stroke="#dddddd" stroke-width="4.8" fill="none" stroke-linecap="round" stroke-linejoin="round"/></svg>
<svg style="left:1100px;top:2036px;" width="34" height="54" viewBox="0 0 34 54"><path d="M2 1 L31 27 L18 28 L26 48 L20 51 L12 31 L2 40 Z" fill="#8c8c8c"/></svg>
<svg style="left:1156px;top:2054px;" width="28" height="20" viewBox="0 0 28 20"><path d="M3 4 L14 15 L25 4" stroke="#dddddd" stroke-width="4.8" fill="none" stroke-linecap="round" stroke-linejoin="round"/></svg>
<svg style="left:2846px;top:2042px;" width="26" height="32" viewBox="0 0 26 32"><path d="M21 3 L6 16 L21 29" stroke="#d8d8d8" stroke-width="4.5" fill="none" stroke-linecap="round" stroke-linejoin="round"/></svg>
<div class="t" style="left:3094px;top:2036.5px;font-size:45px;color:#dadada;font-family:'Liberation Sans',sans-serif;letter-spacing:-0.2px;">01-01 Intro</div>
<svg style="left:3339px;top:2050px;" width="28" height="20" viewBox="0 0 28 20"><path d="M3 4 L14 15 L25 4" stroke="#dddddd" stroke-width="4.8" fill="none" stroke-linecap="round" stroke-linejoin="round"/></svg>
<div class="t" style="left:3436px;top:2039.8px;font-size:42.8px;color:#a0a0a0;font-family:'Liberation Sans',sans-serif;letter-spacing:0.2px;-webkit-text-stroke-width:0;">11:57:02 / 11:57:02</div>
<div style="left:256px;top:2109px;width:3584px;height:4px;background:#060606;"></div>
<div style="left:256px;top:2113px;width:3584px;height:47px;background:#1e1e1e;"></div>
<svg style="left:256px;top:2113px;" width="3584" height="47" viewBox="256 2113 3584 47"><rect x="422.9" y="2130" width="2" height="30" fill="#3a3a3a"/><rect x="446.8" y="2130" width="2" height="30" fill="#3a3a3a"/><rect x="470.7" y="2130" width="2" height="30" fill="#3a3a3a"/><rect x="494.7" y="2130" width="2" height="30" fill="#3a3a3a"/><rect x="518.6" y="2130" width="2" height="30" fill="#3a3a3a"/><rect x="542.5" y="2130" width="2" height="30" fill="#3a3a3a"/><rect x="566.4" y="2130" width="2" height="30" fill="#3a3a3a"/><rect x="590.3" y="2130" width="2" height="30" fill="#3a3a3a"/><rect x="614.2" y="2130" width="2" height="30" fill="#3a3a3a"/><rect x="638.1" y="2130" width="2" height="30" fill="#3a3a3a"/><rect x="662.0" y="2130" width="2" height="30" fill="#3a3a3a"/><rect x="686.0" y="2130" width="2" height="30" fill="#3a3a3a"/><rect x="709.9" y="2130" width="2" height="30" fill="#3a3a3a"/><rect x="733.8" y="2130" width="2" height="30" fill="#3a3a3a"/><rect x="399.0" y="2130" width="3" height="30" fill="#8a8a8a"/><rect x="781.6" y="2130" width="2" height="30" fill="#3a3a3a"/><rect x="805.5" y="2130" width="2" height="30" fill="#3a3a3a"/><rect x="829.4" y="2130" width="2" height="30" fill="#3a3a3a"/><rect x="853.4" y="2130" width="2" height="30" fill="#3a3a3a"/><rect x="877.3" y="2130" width="2" height="30" fill="#3a3a3a"/><rect x="901.2" y="2130" width="2" height="30" fill="#3a3a3a"/><rect x="925.1" y="2130" width="2" height="30" fill="#3a3a3a"/><rect x="949.0" y="2130" width="2" height="30" fill="#3a3a3a"/><rect x="972.9" y="2130" width="2" height="30" fill="#3a3a3a"/><rect x="996.8" y="2130" width="2" height="30" fill="#3a3a3a"/><rect x="1020.7" y="2130" width="2" height="30" fill="#3a3a3a"/><rect x="1044.7" y="2130" width="2" height="30" fill="#3a3a3a"/><rect x="1068.6" y="2130" width="2" height="30" fill="#3a3a3a"/><rect x="1092.5" y="2130" width="2" height="30" fill="#3a3a3a"/><rect x="757.7" y="2130" width="3" height="30" fill="#8a8a8a"/><rect x="1140.3" y="2130" width="2" height="30" fill="#3a3a3a"/><rect x="1164.2" y="2130" width="2" height="30" fill="#3a3a3a"/><rect x="1188.1" y="2130" width="2" height="30" fill="#3a3a3a"/><rect x="1212.1" y="2130" width="2" height="30" fill="#3a3a3a"/><rect x="1236.0" y="2130" width="2" height="30" fill="#3a3a3a"/><rect x="1259.9" y="2130" width="2" height="30" fill="#3a3a3a"/><rect x="1283.8" y="2130" width="2" height="30" fill="#3a3a3a"/><rect x="1307.7" y="2130" width="2" height="30" fill="#3a3a3a"/><rect x="1331.6" y="2130" width="2" height="30" fill="#3a3a3a"/><rect x="1355.5" y="2130" width="2" height="30" fill="#3a3a3a"/><rect x="1379.4" y="2130" width="2" height="30" fill="#3a3a3a"/><rect x="1403.4" y="2130" width="2" height="30" fill="#3a3a3a"/><rect x="1427.3" y="2130" width="2" height="30" fill="#3a3a3a"/><rect x="1451.2" y="2130" width="2" height="30" fill="#3a3a3a"/><rect x="1116.4" y="2130" width="3" height="30" fill="#8a8a8a"/><rect x="1499.0" y="2130" width="2" height="30" fill="#3a3a3a"/><rect x="1522.9" y="2130" width="2" height="30" fill="#3a3a3a"/><rect x="1546.8" y="2130" width="2" height="30" fill="#3a3a3a"/><rect x="1570.8" y="2130" width="2" height="30" fill="#3a3a3a"/><rect x="1594.7" y="2130" width="2" height="30" fill="#3a3a3a"/><rect x="1618.6" y="2130" width="2" height="30" fill="#3a3a3a"/><rect x="1642.5" y="2130" width="2" height="30" fill="#3a3a3a"/><rect x="1666.4" y="2130" width="2" height="30" fill="#3a3a3a"/><rect x="1690.3" y="2130" width="2" height="30" fill="#3a3a3a"/><rect x="1714.2" y="2130" width="2" height="30" fill="#3a3a3a"/><rect x="1738.1" y="2130" width="2" height="30" fill="#3a3a3a"/><rect x="1762.1" y="2130" width="2" height="30" fill="#3a3a3a"/><rect x="1786.0" y="2130" width="2" height="30" fill="#3a3a3a"/><rect x="1809.9" y="2130" width="2" height="30" fill="#3a3a3a"/><rect x="1475.1" y="2130" width="3" height="30" fill="#8a8a8a"/><rect x="1857.7" y="2130" width="2" height="30" fill="#3a3a3a"/><rect x="1881.6" y="2130" width="2" height="30" fill="#3a3a3a"/><rect x="1905.5" y="2130" width="2" height="30" fill="#3a3a3a"/><rect x="1929.5" y="2130" width="2" height="30" fill="#3a3a3a"/><rect x="1953.4" y="2130" width="2" height="30" fill="#3a3a3a"/><rect x="1977.3" y="2130" width="2" height="30" fill="#3a3a3a"/><rect x="2001.2" y="2130" width="2" height="30" fill="#3a3a3a"/><rect x="2025.1" y="2130" width="2" height="30" fill="#3a3a3a"/><rect x="2049.0" y="2130" width="2" height="30" fill="#3a3a3a"/><rect x="2072.9" y="2130" width="2" height="30" fill="#3a3a3a"/><rect x="2096.8" y="2130" width="2" height="30" fill="#3a3a3a"/><rect x="2120.8" y="2130" width="2" height="30" fill="#3a3a3a"/><rect x="2144.7" y="2130" width="2" height="30" fill="#3a3a3a"/><rect x="2168.6" y="2130" width="2" height="30" fill="#3a3a3a"/><rect x="1833.8" y="2130" width="3" height="30" fill="#8a8a8a"/><rect x="2216.4" y="2130" width="2" height="30" fill="#3a3a3a"/><rect x="2240.3" y="2130" width="2" height="30" fill="#3a3a3a"/><rect x="2264.2" y="2130" width="2" height="30" fill="#3a3a3a"/><rect x="2288.2" y="2130" width="2" height="30" fill="#3a3a3a"/><rect x="2312.1" y="2130" width="2" height="30" fill="#3a3a3a"/><rect x="2336.0" y="2130" width="2" height="30" fill="#3a3a3a"/><rect x="2359.9" y="2130" width="2" height="30" fill="#3a3a3a"/><rect x="2383.8" y="2130" width="2" height="30" fill="#3a3a3a"/><rect x="2407.7" y="2130" width="2" height="30" fill="#3a3a3a"/><rect x="2431.6" y="2130" width="2" height="30" fill="#3a3a3a"/><rect x="2455.5" y="2130" width="2" height="30" fill="#3a3a3a"/><rect x="2479.5" y="2130" width="2" height="30" fill="#3a3a3a"/><rect x="2503.4" y="2130" width="2" height="30" fill="#3a3a3a"/><rect x="2527.3" y="2130" width="2" height="30" fill="#3a3a3a"/><rect x="2192.5" y="2130" width="3" height="30" fill="#8a8a8a"/><rect x="2575.1" y="2130" width="2" height="30" fill="#3a3a3a"/><rect x="2599.0" y="2130" width="2" height="30" fill="#3a3a3a"/><rect x="2622.9" y="2130" width="2" height="30" fill="#3a3a3a"/><rect x="2646.9" y="2130" width="2" height="30" fill="#3a3a3a"/><rect x="2670.8" y="2130" width="2" height="30" fill="#3a3a3a"/><rect x="2694.7" y="2130" width="2" height="30" fill="#3a3a3a"/><rect x="2718.6" y="2130" width="2" height="30" fill="#3a3a3a"/><rect x="2742.5" y="2130" width="2" height="30" fill="#3a3a3a"/><rect x="2766.4" y="2130" width="2" height="30" fill="#3a3a3a"/><rect x="2790.3" y="2130" width="2" height="30" fill="#3a3a3a"/><rect x="2814.2" y="2130" width="2" height="30" fill="#3a3a3a"/><rect x="2838.2" y="2130" width="2" height="30" fill="#3a3a3a"/><rect x="2862.1" y="2130" width="2" height="30" fill="#3a3a3a"/><rect x="2886.0" y="2130" width="2" height="30" fill="#3a3a3a"/><rect x="2551.2" y="2130" width="3" height="30" fill="#8a8a8a"/><rect x="2933.8" y="2130" width="2" height="30" fill="#3a3a3a"/><rect x="2957.7" y="2130" width="2" height="30" fill="#3a3a3a"/><rect x="2981.6" y="2130" width="2" height="30" fill="#3a3a3a"/><rect x="3005.6" y="2130" width="2" height="30" fill="#3a3a3a"/><rect x="3029.5" y="2130" width="2" height="30" fill="#3a3a3a"/><rect x="3053.4" y="2130" width="2" height="30" fill="#3a3a3a"/><rect x="3077.3" y="2130" width="2" height="30" fill="#3a3a3a"/><rect x="3101.2" y="2130" width="2" height="30" fill="#3a3a3a"/><rect x="3125.1" y="2130" width="2" height="30" fill="#3a3a3a"/><rect x="3149.0" y="2130" width="2" height="30" fill="#3a3a3a"/><rect x="3172.9" y="2130" width="2" height="30" fill="#3a3a3a"/><rect x="3196.9" y="2130" width="2" height="30" fill="#3a3a3a"/><rect x="3220.8" y="2130" width="2" height="30" fill="#3a3a3a"/><rect x="3244.7" y="2130" width="2" height="30" fill="#3a3a3a"/><rect x="2909.9" y="2130" width="3" height="30" fill="#8a8a8a"/><rect x="3292.5" y="2130" width="2" height="30" fill="#3a3a3a"/><rect x="3316.4" y="2130" width="2" height="30" fill="#3a3a3a"/><rect x="3340.3" y="2130" width="2" height="30" fill="#3a3a3a"/><rect x="3364.3" y="2130" width="2" height="30" fill="#3a3a3a"/><rect x="3388.2" y="2130" width="2" height="30" fill="#3a3a3a"/><rect x="3412.1" y="2130" width="2" height="30" fill="#3a3a3a"/><rect x="3436.0" y="2130" width="2" height="30" fill="#3a3a3a"/><rect x="3459.9" y="2130" width="2" height="30" fill="#3a3a3a"/><rect x="3483.8" y="2130" width="2" height="30" fill="#3a3a3a"/><rect x="3507.7" y="2130" width="2" height="30" fill="#3a3a3a"/><rect x="3531.6" y="2130" width="2" height="30" fill="#3a3a3a"/><rect x="3555.6" y="2130" width="2" height="30" fill="#3a3a3a"/><rect x="3579.5" y="2130" width="2" height="30" fill="#3a3a3a"/><rect x="3603.4" y="2130" width="2" height="30" fill="#3a3a3a"/><rect x="3268.6" y="2130" width="3" height="30" fill="#8a8a8a"/><rect x="3651.2" y="2130" width="2" height="30" fill="#3a3a3a"/><rect x="3675.1" y="2130" width="2" height="30" fill="#3a3a3a"/><rect x="3699.0" y="2130" width="2" height="30" fill="#3a3a3a"/><rect x="3723.0" y="2130" width="2" height="30" fill="#3a3a3a"/><rect x="3746.9" y="2130" width="2" height="30" fill="#3a3a3a"/><rect x="3770.8" y="2130" width="2" height="30" fill="#3a3a3a"/><rect x="3794.7" y="2130" width="2" height="30" fill="#3a3a3a"/><rect x="3818.6" y="2130" width="2" height="30" fill="#3a3a3a"/><rect x="3842.5" y="2130" width="2" height="30" fill="#3a3a3a"/><rect x="3866.4" y="2130" width="2" height="30" fill="#3a3a3a"/><rect x="3890.3" y="2130" width="2" height="30" fill="#3a3a3a"/><rect x="3914.3" y="2130" width="2" height="30" fill="#3a3a3a"/><rect x="3938.2" y="2130" width="2" height="30" fill="#3a3a3a"/><rect x="3962.1" y="2130" width="2" height="30" fill="#3a3a3a"/><rect x="3627.3" y="2130" width="3" height="30" fill="#8a8a8a"/><rect x="4009.9" y="2130" width="2" height="30" fill="#3a3a3a"/><rect x="4033.8" y="2130" width="2" height="30" fill="#3a3a3a"/><rect x="4057.7" y="2130" width="2" height="30" fill="#3a3a3a"/><rect x="4081.7" y="2130" width="2" height="30" fill="#3a3a3a"/><rect x="4105.6" y="2130" width="2" height="30" fill="#3a3a3a"/><rect x="4129.5" y="2130" width="2" height="30" fill="#3a3a3a"/><rect x="4153.4" y="2130" width="2" height="30" fill="#3a3a3a"/><rect x="4177.3" y="2130" width="2" height="30" fill="#3a3a3a"/><rect x="4201.2" y="2130" width="2" height="30" fill="#3a3a3a"/><rect x="4225.1" y="2130" width="2" height="30" fill="#3a3a3a"/><rect x="4249.0" y="2130" width="2" height="30" fill="#3a3a3a"/><rect x="4273.0" y="2130" width="2" height="30" fill="#3a3a3a"/><rect x="4296.9" y="2130" width="2" height="30" fill="#3a3a3a"/><rect x="4320.8" y="2130" width="2" height="30" fill="#3a3a3a"/><rect x="3986.0" y="2130" width="3" height="30" fill="#8a8a8a"/></svg>
<div class="t" style="left:433.0px;top:2132.5px;font-size:39px;color:#707070;font-family:'Liberation Sans',sans-serif;letter-spacing:0.3px;-webkit-text-stroke-width:0;">00:00:00:00</div>
<div class="t" style="left:791.7px;top:2132.5px;font-size:39px;color:#707070;font-family:'Liberation Sans',sans-serif;letter-spacing:0.3px;-webkit-text-stroke-width:0;">00:01:00:00</div>
<div class="t" style="left:1150.4px;top:2132.5px;font-size:39px;color:#707070;font-family:'Liberation Sans',sans-serif;letter-spacing:0.3px;-webkit-text-stroke-width:0;">00:02:00:00</div>
<div class="t" style="left:1509.1px;top:2132.5px;font-size:39px;color:#707070;font-family:'Liberation Sans',sans-serif;letter-spacing:0.3px;-webkit-text-stroke-width:0;">00:03:00:00</div>
<div class="t" style="left:1867.8px;top:2132.5px;font-size:39px;color:#707070;font-family:'Liberation Sans',sans-serif;letter-spacing:0.3px;-webkit-text-stroke-width:0;">00:04:00:00</div>
<div class="t" style="left:2226.5px;top:2132.5px;font-size:39px;color:#707070;font-family:'Liberation Sans',sans-serif;letter-spacing:0.3px;-webkit-text-stroke-width:0;">00:05:00:00</div>
<div class="t" style="left:2585.2px;top:2132.5px;font-size:39px;color:#707070;font-family:'Liberation Sans',sans-serif;letter-spacing:0.3px;-webkit-text-stroke-width:0;">00:06:00:00</div>
<div class="t" style="left:2943.9px;top:2132.5px;font-size:39px;color:#707070;font-family:'Liberation Sans',sans-serif;letter-spacing:0.3px;-webkit-text-stroke-width:0;">00:07:00:00</div>
<div class="t" style="left:3302.6px;top:2132.5px;font-size:39px;color:#707070;font-family:'Liberation Sans',sans-serif;letter-spacing:0.3px;-webkit-text-stroke-width:0;">00:08:00:00</div>
<div class="t" style="left:3661.2999999999997px;top:2132.5px;font-size:39px;color:#707070;font-family:'Liberation Sans',sans-serif;letter-spacing:0.3px;-webkit-text-stroke-width:0;">00:09:00:00</div>
<div style="left:1370px;top:2120px;width:2470px;height:6px;background:repeating-linear-gradient(90deg,#666 0 6.5px,transparent 6.5px 13.3px);"></div>
<div style="left:1900px;top:2130px;width:29px;height:40px;border:2.5px solid #7c7c7c;border-radius:4px;"></div>
</body></html>
